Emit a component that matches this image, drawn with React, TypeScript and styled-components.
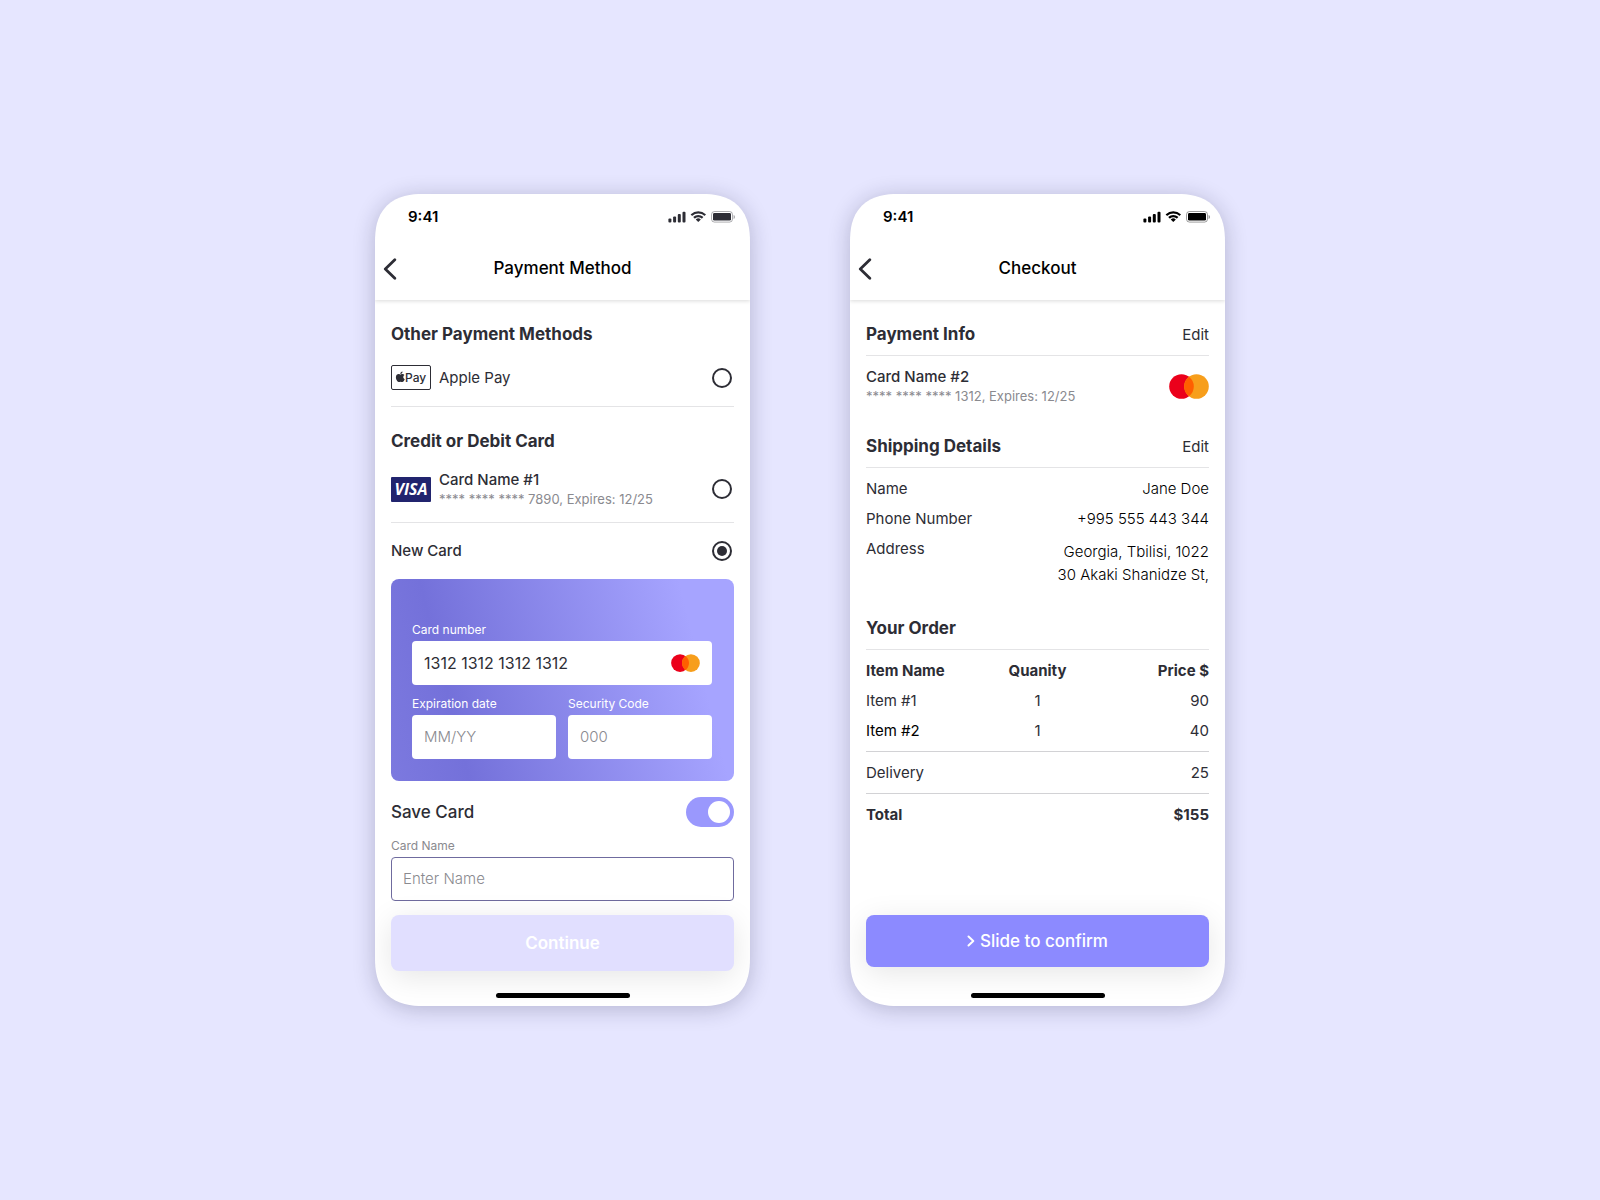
import React from "react";
import styled, { createGlobalStyle, css } from "styled-components";

const ink = "#2d2d35";
const muted = "#8a8a8f";
const accent = "#8c8aff";

const GlobalStyle = createGlobalStyle`
  *, *::before, *::after { box-sizing: border-box; }
  body {
    margin: 0;
    background: #e6e6ff;
    color: ${ink};
    font-family: Inter, Roboto, "Liberation Sans", sans-serif;
    font-size: 15px;
    -webkit-font-smoothing: antialiased;
  }
  button, input { font: inherit; color: inherit; }
`;

const Stage = styled.div`
  min-height: 100vh;
  padding: 40px 16px;
  display: flex;
  flex-wrap: wrap;
  align-items: center;
  align-content: center;
  justify-content: center;
  gap: 40px 100px;
`;

const Phone = styled.section`
  flex: 0 1 375px;
  min-height: 812px;
  display: flex;
  flex-direction: column;
  overflow: hidden;
  background: #fff;
  border-radius: 42px;
  box-shadow: 0 3px 22px rgba(20, 20, 60, 0.24);
  @supports (corner-shape: superellipse(1.3)) {
    border-radius: 48px;
    corner-shape: superellipse(1.3);
  }
`;

const StatusBar = styled.div<{ $color: string }>`
  height: 44px;
  padding: 2px 15px 0 33px;
  display: flex;
  align-items: center;
  justify-content: space-between;
  color: ${(p) => p.$color};
`;

const Clock = styled.time`
  color: #000;
  font-size: 15px;
  font-weight: 600;
  line-height: 20px;
`;

const NavBar = styled.header`
  height: 62px;
  padding: 0 8px;
  display: grid;
  grid-template-columns: 32px 1fr 32px;
  align-items: center;
  box-shadow: 0 1px 4px rgba(0, 0, 0, 0.15);
  clip-path: inset(0 0 -8px 0);
`;

const BackButton = styled.button`
  height: 32px;
  padding: 0;
  border: 0;
  background: none;
  display: flex;
  align-items: center;
  cursor: pointer;
`;

const ScreenTitle = styled.h1`
  margin: 0;
  padding-bottom: 2px;
  color: #000;
  font-size: 17px;
  font-weight: 500;
  line-height: 24px;
  text-align: center;
`;

const Content = styled.div`
  padding: 22px 16px 14px;
  display: flex;
  flex-direction: column;
`;

const Section = styled.section<{ $space?: number }>`
  margin-top: ${(p) => p.$space ?? 0}px;
`;

const SectionTitle = styled.h2`
  margin: 0;
  font-size: 17px;
  font-weight: 700;
  line-height: 24px;
`;

const SectionHead = styled.div`
  padding-bottom: 9px;
  display: flex;
  align-items: baseline;
  justify-content: space-between;
  border-bottom: 1px solid #e4e4e6;
`;

const EditLink = styled.a`
  color: ${ink};
  line-height: 20px;
  text-decoration: none;
`;

const Option = styled.label<{ $top: number; $bottom: number; $line?: boolean }>`
  padding: ${(p) => p.$top}px 2px ${(p) => p.$bottom}px 0;
  display: flex;
  align-items: center;
  gap: 8px;
  cursor: pointer;
  ${(p) => p.$line && css`border-bottom: 1px solid #e4e4e6;`}
`;

const OptionText = styled.span`
  flex: 1;
  display: flex;
  flex-direction: column;
`;

const OptionName = styled.span<{ $strong?: boolean }>`
  font-size: 15px;
  font-weight: ${(p) => (p.$strong ? 500 : 400)};
  line-height: 20px;
`;

const OptionHint = styled.span`
  color: ${muted};
  font-size: 13px;
  line-height: 18px;
`;

const Radio = styled.input`
  appearance: none;
  flex: none;
  width: 20px;
  height: 20px;
  margin: 0;
  display: grid;
  place-items: center;
  border: 2px solid ${ink};
  border-radius: 50%;
  cursor: pointer;
  &:checked::before {
    content: "";
    width: 10px;
    height: 10px;
    border-radius: 50%;
    background: ${ink};
  }
`;

const CardPanel = styled.div`
  padding: 43px 22px 22px 21px;
  display: flex;
  flex-direction: column;
  gap: 11px;
  border-radius: 8px;
  background: linear-gradient(76deg, #7c79df 0%, #7471da 20%, #a6a4ff 86%);
`;

const FieldPair = styled.div`
  display: grid;
  grid-template-columns: repeat(2, minmax(0, 1fr));
  gap: 12px;
`;

const Field = styled.label<{ $color: string }>`
  display: flex;
  flex-direction: column;
  gap: 3px;
  color: ${(p) => p.$color};
  font-size: 12px;
  line-height: 16px;
`;

const InputBox = styled.span<{ $outlined?: boolean }>`
  height: 44px;
  padding: 0 12px;
  display: flex;
  align-items: center;
  border-radius: 4px;
  background: #fff;
  ${(p) => p.$outlined && css`
    padding: 0 11px;
    border: 1px solid #6f6b9e;
  `}
`;

const Input = styled.input<{ $large?: boolean }>`
  flex: 1;
  min-width: 0;
  padding: 0;
  border: 0;
  outline: 0;
  background: none;
  color: ${ink};
  font-size: ${(p) => (p.$large ? 16 : 15)}px;
  line-height: 20px;
  &::placeholder { color: ${muted}; font-weight: 300; opacity: 1; }
`;

const SwitchRow = styled.label`
  margin: 16px 0 11px;
  display: flex;
  align-items: center;
  justify-content: space-between;
  font-size: 17px;
  font-weight: 500;
  line-height: 24px;
  cursor: pointer;
`;

const Switch = styled.input`
  appearance: none;
  width: 48px;
  height: 30px;
  margin: 0;
  padding: 4px;
  display: flex;
  border-radius: 15px;
  background: #d5d5de;
  cursor: pointer;
  &::before {
    content: "";
    width: 22px;
    height: 22px;
    border-radius: 50%;
    background: #fff;
  }
  &:checked {
    justify-content: flex-end;
    background: #9a98fd;
  }
`;

const CardSummary = styled.div`
  padding-top: 11px;
  display: flex;
  align-items: center;
`;

const Details = styled.dl`
  margin: 0;
  padding-top: 6px;
`;

const DetailRow = styled.div`
  display: flex;
  justify-content: space-between;
  line-height: 30px;
`;

const Term = styled.dt``;

const Value = styled.dd<{ $block?: boolean }>`
  margin: 0;
  color: #000;
  font-weight: 300;
  text-align: right;
  ${(p) => p.$block && css`
    padding-top: 6px;
    line-height: 23px;
  `}
`;

const OrderTable = styled.table`
  width: 100%;
  table-layout: fixed;
  border-spacing: 0;
  line-height: 30px;
  text-align: center;
  th, td { padding: 0; }
  th { font-weight: 700; }
  th:first-child, td:first-child { text-align: left; }
  th:last-child, td:last-child { text-align: right; }
  thead th { padding-top: 6px; }
  tbody tr:last-child td { padding-bottom: 5px; }
  tfoot th, tfoot td {
    padding: 6px 0 5px;
    border-top: 1px solid #d2d2d5;
  }
`;

const ItemName = styled.td<{ $dark?: boolean }>`
  color: ${(p) => (p.$dark ? "#000" : "inherit")};
`;

const Plain = styled.th`
  && { font-weight: 400; }
`;

const Footer = styled.footer`
  min-height: 91px;
  margin-top: auto;
  padding: 0 16px 8px;
  display: flex;
  flex-direction: column;
  align-items: center;
  justify-content: space-between;
`;

const ActionButton = styled.button<{ $tall?: boolean }>`
  width: 100%;
  height: ${(p) => (p.$tall ? 56 : 52)}px;
  border: 0;
  border-radius: 8px;
  display: flex;
  align-items: center;
  justify-content: center;
  gap: 5px;
  background: ${accent};
  box-shadow: 0 6px 30px rgba(0, 0, 0, 0.1);
  color: #fff;
  font-size: 17px;
  font-weight: 500;
  cursor: pointer;
  &:disabled {
    background: #e1dfff;
    font-weight: 600;
    cursor: default;
  }
`;

const HomeIndicator = styled.div`
  width: 134px;
  height: 5px;
  border-radius: 3px;
  background: #000;
`;

function StatusIcons() {
  return (
    <svg width="68" height="14" viewBox="0 0 68 14" fill="currentColor" aria-hidden="true">
      <rect x="1.4" y="8.4" width="3" height="4" rx="1" />
      <rect x="6.1" y="6.4" width="3" height="6" rx="1" />
      <rect x="10.8" y="4" width="3" height="8.4" rx="1" />
      <rect x="15.5" y="1.7" width="3" height="10.7" rx="1" />
      <path d="M31.300 3.500c2.200 0 4.300.85 5.900 2.350.12.12.31.12.43 0l1.150-1.160a.32.32 0 0 0 0-.46 10.800 10.800 0 0 0-14.960 0 .32.32 0 0 0 0 .46l1.150 1.160c.12.12.31.12.43 0A8.600 8.600 0 0 1 31.300 3.500Z" />
      <path d="M31.300 7.250c1.200 0 2.370.45 3.270 1.260.12.12.31.11.43 0l1.150-1.170a.33.33 0 0 0 0-.47 7.040 7.040 0 0 0-9.700 0 .33.33 0 0 0 0 .47l1.150 1.170c.12.11.31.12.43 0A4.900 4.900 0 0 1 31.300 7.250Z" />
      <path d="M33.600 9.800a.33.33 0 0 0 0-.48 3.500 3.500 0 0 0-4.600 0 .33.33 0 0 0 0 .48l2 2.020c.16.16.42.16.58 0l2.020-2.020Z" />
      <rect x="44.5" y="1.5" width="21" height="10.6" rx="3" fill="none" stroke="currentColor" strokeOpacity="0.38" />
      <rect x="46" y="3" width="18" height="7.6" rx="1.4" />
      <path d="M66.6 5v4c.8-.34 1.300-1.130 1.300-2s-.5-1.660-1.300-2Z" opacity="0.45" />
    </svg>
  );
}

function BackIcon() {
  return (
    <svg width="14" height="22" viewBox="0 0 14 22" fill="none" stroke="currentColor" strokeWidth="2.8" strokeLinecap="round" strokeLinejoin="round" aria-hidden="true">
      <path d="M11.800 1.700 2.300 11l9.500 9.300" />
    </svg>
  );
}

const LogoText = styled.text`
  font-family: Inter, "Liberation Sans", sans-serif;
  font-size: 12px;
  font-weight: 500;
`;

const VisaText = styled.text`
  font-family: "Open Sans", "Noto Sans", sans-serif;
  font-size: 16px;
  font-style: italic;
  font-weight: 700;
`;

function ApplePayLogo() {
  return (
    <svg width="40" height="25" viewBox="0 0 40 25" fill={ink} aria-hidden="true">
      <rect x="0.5" y="0.5" width="39" height="24" rx="1.5" fill="#fff" stroke={ink} />
      <g transform="translate(4.800 5.800) scale(0.0235)">
        <path d="M318.7 268.7c-.2-36.7 16.4-64.4 50-84.800-18.800-26.900-47.200-41.700-84.700-44.600-35.500-2.800-74.300 20.700-88.500 20.700-15 0-49.400-19.700-76.400-19.700C63.300 141.200 4 184.800 4 273.500q0 39.300 14.400 81.200c12.800 36.700 59 126.700 107.200 125.200 25.200-.6 43-17.900 75.800-17.900 31.800 0 48.300 17.900 76.400 17.900 48.600-.7 90.400-82.500 102.600-119.300-65.200-30.700-61.700-90-61.700-91.900zm-56.600-164.200c27.300-32.400 24.800-61.900 24-72.500-24.100 1.400-52 16.400-67.900 34.900-17.500 19.800-27.800 44.300-25.600 71.900 26.100 2 49.900-11.400 69.500-34.300z" />
      </g>
      <LogoText x="14" y="16.500">Pay</LogoText>
    </svg>
  );
}

function VisaLogo() {
  return (
    <svg width="40" height="25" viewBox="0 0 40 25" aria-hidden="true">
      <rect width="40" height="25" rx="1" fill="#21246e" />
      <VisaText x="20" y="18" fill="#fff" textAnchor="middle">VISA</VisaText>
    </svg>
  );
}

function MastercardLogo({ width }: { width: number }) {
  return (
    <svg width={width} height={(width * 25) / 40} viewBox="0 0 40 25" role="img" aria-label="Mastercard">
      <circle cx="12.500" cy="12.500" r="12.300" fill="#eb001b" />
      <circle cx="27.500" cy="12.500" r="12.300" fill="#f79e1b" />
      <path d="M20 2.750a12.300 12.300 0 0 1 0 19.500a12.300 12.300 0 0 1 0-19.500Z" fill="#ff5f00" />
    </svg>
  );
}

function ChevronIcon() {
  return (
    <svg width="8" height="12" viewBox="0 0 8 12" fill="none" stroke="currentColor" strokeWidth="2" strokeLinecap="round" strokeLinejoin="round" aria-hidden="true">
      <path d="M1.500 1.500 6.300 6l-4.800 4.500" />
    </svg>
  );
}

function ScreenHeader({ title, iconColor }: { title: string; iconColor: string }) {
  return (
    <>
      <StatusBar $color={iconColor}>
        <Clock>9:41</Clock>
        <StatusIcons />
      </StatusBar>
      <NavBar>
        <BackButton type="button" aria-label="Back">
          <BackIcon />
        </BackButton>
        <ScreenTitle>{title}</ScreenTitle>
      </NavBar>
    </>
  );
}

function PaymentMethodScreen() {
  return (
    <Phone>
      <ScreenHeader title="Payment Method" iconColor={ink} />
      <Content>
        <Section>
          <SectionTitle>Other Payment Methods</SectionTitle>
          <Option $top={19} $bottom={16} $line>
            <ApplePayLogo />
            <OptionText>
              <OptionName>Apple Pay</OptionName>
            </OptionText>
            <Radio type="radio" name="method" value="apple" />
          </Option>
        </Section>
        <Section $space={22}>
          <SectionTitle>Credit or Debit Card</SectionTitle>
          <Option $top={17} $bottom={14} $line>
            <VisaLogo />
            <OptionText>
              <OptionName $strong>Card Name #1</OptionName>
              <OptionHint>**** **** **** 7890, Expires: 12/25</OptionHint>
            </OptionText>
            <Radio type="radio" name="method" value="visa" />
          </Option>
          <Option $top={18} $bottom={18}>
            <OptionText>
              <OptionName $strong>New Card</OptionName>
            </OptionText>
            <Radio type="radio" name="method" value="new" defaultChecked />
          </Option>
          <CardPanel>
            <Field $color="#fff">
              Card number
              <InputBox>
                <Input $large defaultValue="1312 1312 1312 1312" inputMode="numeric" />
                <MastercardLogo width={29} />
              </InputBox>
            </Field>
            <FieldPair>
              <Field $color="#fff">
                Expiration date
                <InputBox>
                  <Input placeholder="MM/YY" />
                </InputBox>
              </Field>
              <Field $color="#fff">
                Security Code
                <InputBox>
                  <Input placeholder="000" inputMode="numeric" />
                </InputBox>
              </Field>
            </FieldPair>
          </CardPanel>
        </Section>
        <SwitchRow>
          Save Card
          <Switch type="checkbox" role="switch" defaultChecked />
        </SwitchRow>
        <Field $color={muted}>
          Card Name
          <InputBox $outlined>
            <Input placeholder="Enter Name" />
          </InputBox>
        </Field>
      </Content>
      <Footer>
        <ActionButton type="button" $tall disabled>
          Continue
        </ActionButton>
        <HomeIndicator />
      </Footer>
    </Phone>
  );
}

const items = [
  { name: "Item #1", quantity: 1, price: 90 },
  { name: "Item #2", quantity: 1, price: 40, dark: true },
];

function CheckoutScreen() {
  return (
    <Phone>
      <ScreenHeader title="Checkout" iconColor="#000" />
      <Content>
        <Section>
          <SectionHead>
            <SectionTitle>Payment Info</SectionTitle>
            <EditLink href="#payment">Edit</EditLink>
          </SectionHead>
          <CardSummary>
            <OptionText>
              <OptionName $strong>Card Name #2</OptionName>
              <OptionHint>**** **** **** 1312, Expires: 12/25</OptionHint>
            </OptionText>
            <MastercardLogo width={40} />
          </CardSummary>
        </Section>
        <Section $space={29}>
          <SectionHead>
            <SectionTitle>Shipping Details</SectionTitle>
            <EditLink href="#shipping">Edit</EditLink>
          </SectionHead>
          <Details>
            <DetailRow>
              <Term>Name</Term>
              <Value>Jane Doe</Value>
            </DetailRow>
            <DetailRow>
              <Term>Phone Number</Term>
              <Value>+995 555 443 344</Value>
            </DetailRow>
            <DetailRow>
              <Term>Address</Term>
              <Value $block>
                Georgia, Tbilisi, 1022
                <br />
                30 Akaki Shanidze St,
              </Value>
            </DetailRow>
          </Details>
        </Section>
        <Section $space={30}>
          <SectionHead>
            <SectionTitle>Your Order</SectionTitle>
          </SectionHead>
          <OrderTable>
            <thead>
              <tr>
                <th scope="col">Item Name</th>
                <th scope="col">Quanity</th>
                <th scope="col">Price $</th>
              </tr>
            </thead>
            <tbody>
              {items.map((item) => (
                <tr key={item.name}>
                  <ItemName $dark={item.dark}>{item.name}</ItemName>
                  <td>{item.quantity}</td>
                  <td>{item.price}</td>
                </tr>
              ))}
            </tbody>
            <tfoot>
              <tr>
                <Plain scope="row" colSpan={2}>Delivery</Plain>
                <td>25</td>
              </tr>
              <tr>
                <th scope="row" colSpan={2}>Total</th>
                <th>$155</th>
              </tr>
            </tfoot>
          </OrderTable>
        </Section>
      </Content>
      <Footer>
        <ActionButton type="button">
          <ChevronIcon />
          Slide to confirm
        </ActionButton>
        <HomeIndicator />
      </Footer>
    </Phone>
  );
}

export default function App() {
  return (
    <>
      <GlobalStyle />
      <Stage>
        <PaymentMethodScreen />
        <CheckoutScreen />
      </Stage>
    </>
  );
}
